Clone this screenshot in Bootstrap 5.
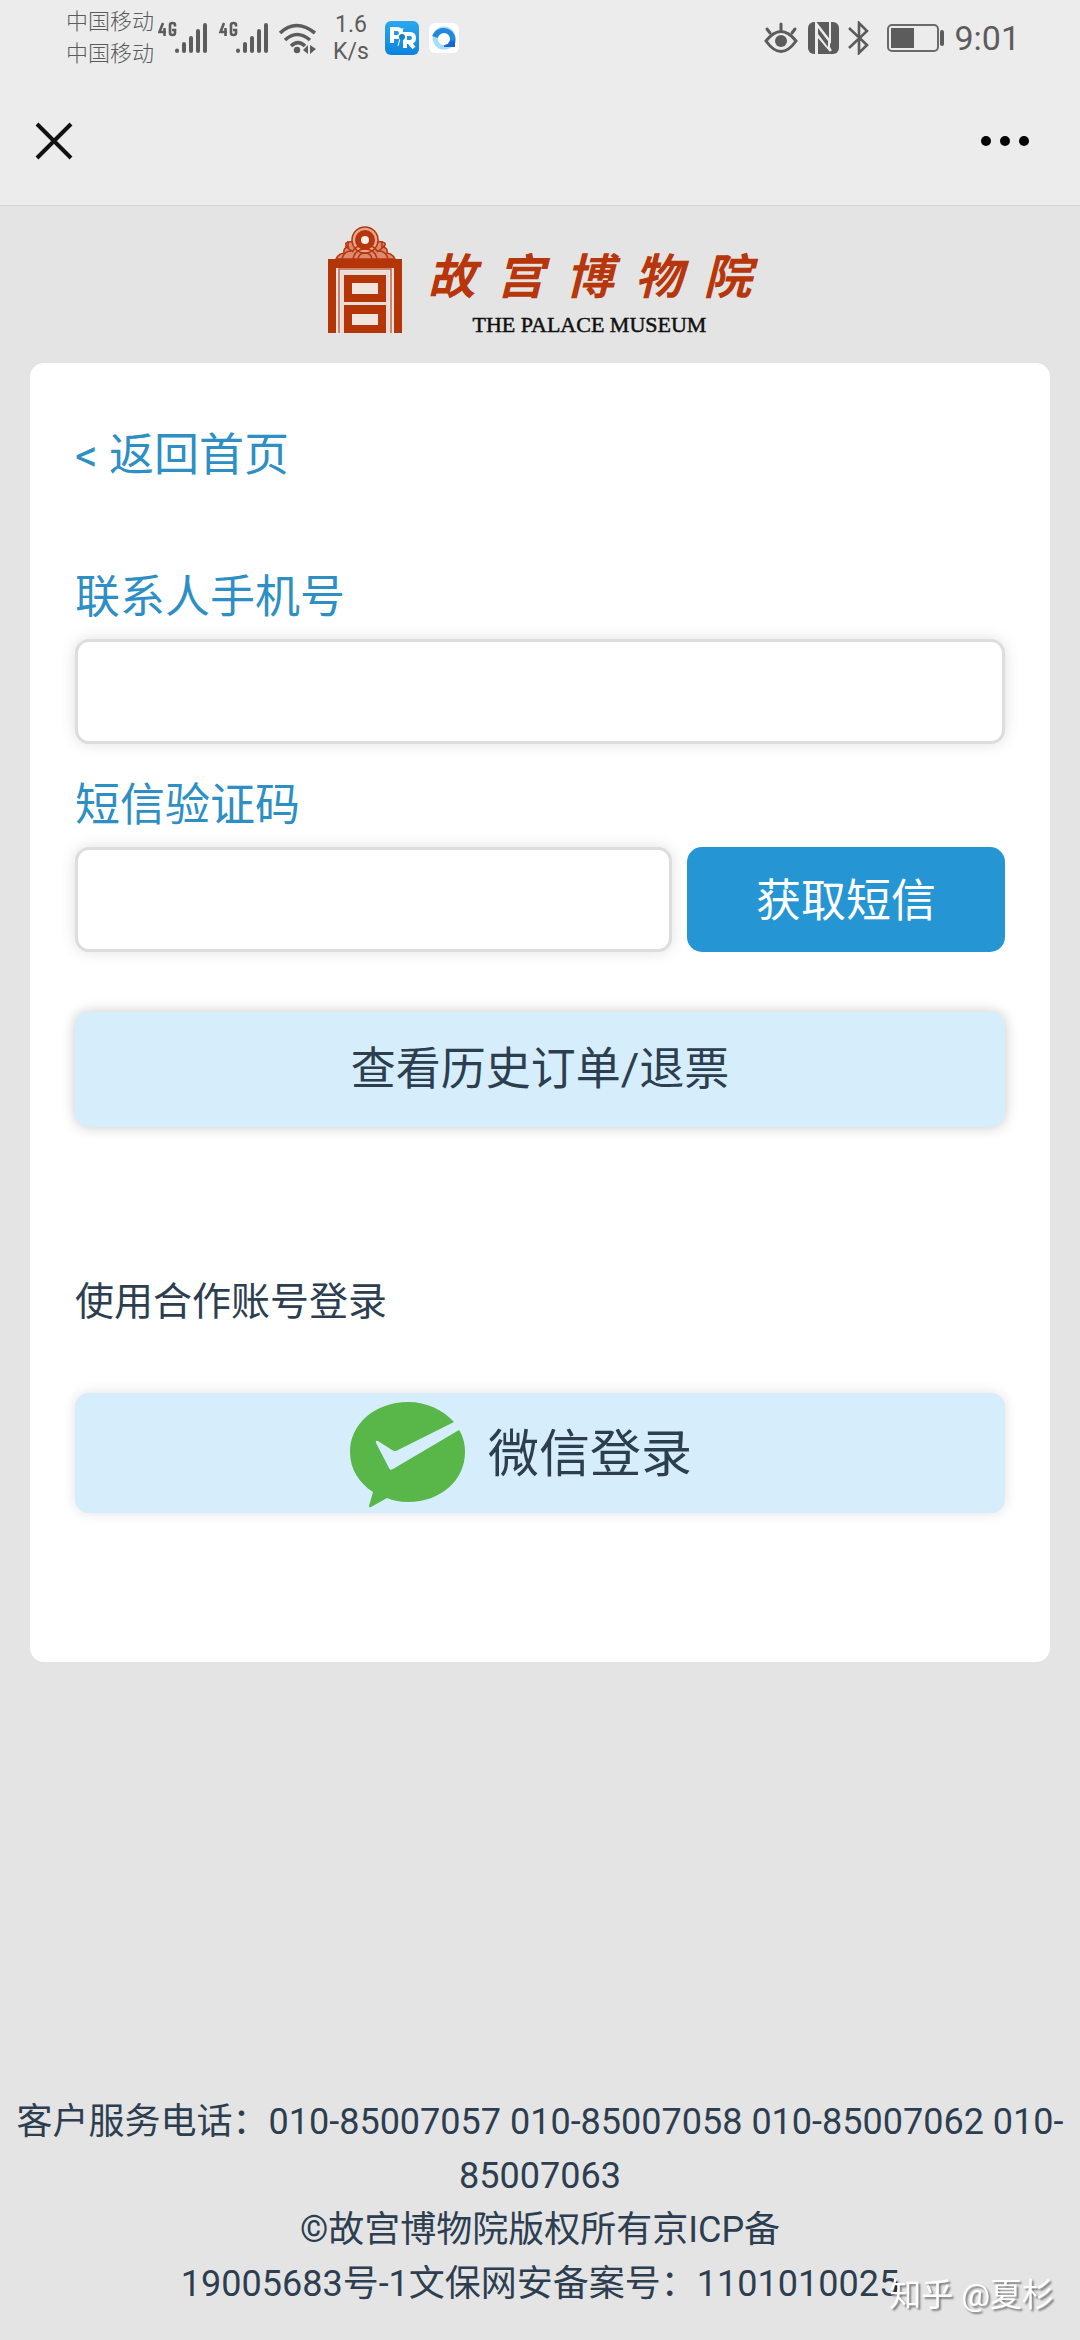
<!DOCTYPE html>
<html lang="zh-CN">
<head>
<meta charset="utf-8">
<meta name="viewport" content="width=device-width, initial-scale=1">
<title>故宫博物院</title>
<link href="https://cdn.jsdelivr.net/npm/bootstrap@5.3.0/dist/css/bootstrap.min.css" rel="stylesheet">
<style>
  body { background: #e4e4e4; color: #2c3e50; font-family: Roboto, "Noto Sans CJK SC", sans-serif; font-size: 45px; line-height: 60px; }
  svg { display: block; flex: none; }
  .top-area { background: #ececec; border-bottom: 1px solid #d6d6d6; }
  .status-line { height: 76px; padding: 0 60px 0 66px; color: #5c5c5c; }
  .carriers { font-size: 22px; line-height: 32px; font-weight: 300; }
  .speed { width: 36px; margin: 0 16px 0 13px; font-size: 23px; line-height: 27px; text-align: center; }
  .clock { font-size: 34px; line-height: 40px; }
  .title-line { height: 129px; padding: 0 45px 0 30px; }
  .icon-btn { background: none; border: 0; padding: 0; }
  .brand { padding: 19px 0 26px; gap: 25px; }
  .brand-cn { color: #b7360b; font: italic 700 48px/64px "Noto Sans CJK SC", sans-serif; gap: 21px; }
  .brand-en { color: #111; font: 22px/24px "Liberation Serif", serif; -webkit-text-stroke: .5px #111; }
  .panel { background: #fff; border-radius: 14px; margin: 0 30px; padding: 63px 45px 149px; }
  .back-link, .field-label { color: #2e8fc4; }
  .back-link { display: inline-block; margin-bottom: 82px; }
  .field-label { display: block; margin-bottom: 11px; }
  .field-box { height: 105px; border: 3px solid #ddd; border-radius: 14px; box-shadow: 0 0 16px rgba(0,0,0,.12); font-size: 45px; }
  .field-box:focus { border-color: #2695d3; }
  .code-row { gap: 15px; }
  .sms-btn { width: 318px; flex: none; height: 105px; padding-top: 10px; border-radius: 15px; background: #2695d3; color: #fff; font-size: 45px; line-height: 60px; }
  .pale-btn { width: 100%; border: 0; border-radius: 14px; background: #d6edfb; color: #2c3e50; box-shadow: 0 0 14px rgba(0,0,0,.22); }
  .order-btn { height: 115px; margin-top: 60px; font-size: 45px; line-height: 60px; }
  .partner { margin: 145px 0 61px; font-size: 39px; }
  .wechat-btn { height: 120px; gap: 22px; padding: 4px 38px 0 0; font-size: 51px; box-shadow: 0 0 14px rgba(0,0,0,.12); }
  .page-foot { padding: 40px 8px 29px; font-size: 36px; line-height: 54px; }
  .watermark { position: fixed; right: 26px; bottom: 25px; color: #fff; font-size: 32px; line-height: 40px; text-shadow: 2px 2px 2px rgba(0,0,0,.45); }
</style>
</head>
<body class="min-vh-100 d-flex flex-column">
<header class="top-area">
  <div class="status-line d-flex align-items-center justify-content-between">
    <div class="d-flex align-items-center">
      <div class="carriers"><div>中国移动</div><div>中国移动</div></div>
      <svg class="ms-1" width="112" height="34" viewBox="0 0 112 34" aria-label="4G">
        <g id="sig">
          <g fill="none" stroke="#5c5c5c" stroke-width="2.6"><path d="M5 2 1.500 11h6.500M6.500 7v8M17 5.500V4q0-2-2.500-2T12 4v8q0 2 2.500 2T17 12V9h-3"/></g>
          <g stroke="#5c5c5c" stroke-width="4" stroke-linecap="round"><path d="M19 29.500v.5M26 23v7M33 17v13M40 10v20M47 4v26"/></g>
        </g>
        <use href="#sig" x="61"/>
      </svg>
      <svg class="ms-2" width="42" height="34" viewBox="0 0 42 34">
        <g fill="none" stroke="#5c5c5c" stroke-width="3.600"><path d="M2 12q16-15 35 0M7 19q12-11 25 0M13 25q7-7 14 0"/></g>
        <circle cx="19" cy="29" r="3.200" fill="#5c5c5c"/>
        <path d="M30 24v9l-5-4zM32 24v9l6-5z" fill="#5c5c5c"/>
      </svg>
      <div class="speed"><div>1.6</div><div>K/s</div></div>
      <svg width="34" height="34" viewBox="0 0 34 34">
        <defs><linearGradient id="bl" x2="0" y2="1"><stop stop-color="#2aa8ef"/><stop offset="1" stop-color="#0d82dc"/></linearGradient></defs>
        <rect width="34" height="34" rx="6" fill="url(#bl)"/>
        <g fill="none" stroke="#fff" stroke-width="4"><path d="M7 22V8h5q4 0 4 4t-4 4H8M20 27V13h5q4 0 4 4t-4 4h-4M24 21l5 6"/></g>
        <path d="m18 7-5 18" stroke="#fff" stroke-width="1"/>
        <circle cx="17" cy="16" r="3" fill="#1380c8"/>
      </svg>
      <svg class="ms-2" width="34" height="34" viewBox="0 0 34 34">
        <rect x="2" y="2" width="30" height="30" rx="6" fill="#fff"/>
        <circle cx="17" cy="17" r="9" fill="none" stroke="#a9dcf7" stroke-width="5"/>
        <path d="M8 16A9 9 0 1 1 25 22" fill="none" stroke="#2089de" stroke-width="6"/>
        <path d="M17 25q3-7 11-5v6H17z" fill="#1569cf"/>
        <circle cx="17" cy="18" r="6" fill="#fff"/>
      </svg>
    </div>
    <div class="d-flex align-items-center">
      <svg width="34" height="34" viewBox="0 0 34 34" fill="none" stroke="#5c5c5c">
        <path d="M2 20q15-19 30 0-15 21-30 0z" stroke-width="3"/>
        <path d="M17 10V3M6 12 3 8M28 12l3-4" stroke-width="3" stroke-linecap="round"/>
        <circle cx="17" cy="20" r="6" fill="#5c5c5c" stroke="none"/>
      </svg>
      <svg class="ms-2" width="34" height="34" viewBox="0 0 34 34">
        <rect x="2" y="1" width="31" height="32" rx="6" fill="#5c5c5c"/>
        <path d="M10 32V2l14 18V1M11 4l14 26" fill="none" stroke="#ececec" stroke-width="2"/>
        <path d="m10 2 14 17v12L12 17v16H9z" fill="#ececec"/>
        <path d="m12 7 10 13v6L12 13z" fill="#5c5c5c"/>
      </svg>
      <svg class="ms-2" width="22" height="34" viewBox="0 0 22 34" fill="none" stroke="#5c5c5c" stroke-width="2.600">
        <path d="m1 7 18 17-8 8V2l8 8L1 27"/>
      </svg>
      <svg class="ms-3" width="60" height="30" viewBox="0 0 60 30">
        <rect x="2" y="2" width="50" height="26" rx="4" fill="none" stroke="#6a6a6a" stroke-width="2"/>
        <rect x="5" y="5" width="23" height="20" fill="#5c5c5c"/>
        <rect x="54" y="7" width="4" height="16" rx="2" fill="#5c5c5c"/>
      </svg>
      <div class="clock ms-2">9:01</div>
    </div>
  </div>
  <div class="title-line d-flex align-items-center justify-content-between">
    <button type="button" class="icon-btn" aria-label="关闭">
      <svg width="48" height="48" viewBox="0 0 48 48" stroke="#111" stroke-width="4"><path d="m7 7 34 34M41 7 7 41"/></svg>
    </button>
    <button type="button" class="icon-btn" aria-label="更多">
      <svg width="60" height="20" viewBox="0 0 60 20"><circle cx="11" cy="10" r="5"/><circle cx="30" cy="10" r="5"/><circle cx="49" cy="10" r="5"/></svg>
    </button>
  </div>
</header>

<div class="brand d-flex justify-content-center align-items-center">
  <svg width="74" height="110" viewBox="0 0 74 110">
    <g fill="#e4b8a8" stroke="#b7360b" stroke-width="1.500">
      <path d="M8 33q2-5 8-6-1-5 4-6-5-4 1-5 5-2 9 3h15q4-5 9-3 6 1 1 5 5 1 4 6 6 1 8 6z" fill="#d98a70"/>
      <circle cx="37" cy="14" r="13" fill="#e4a792"/>
      <path d="M14 33q2-9 11-8 3-6 12-6t12 6q9-1 11 8M25 33q2-10 12-10t12 10M30 33q1-6 7-6t7 6M17 20l8 6M57 20l-8 6M20 15v7M54 15v7" fill="none"/>
    </g>
    <circle cx="37" cy="14" r="7" fill="#f4eee9" stroke="#b7360b" stroke-width="6"/>
    <path d="M13 107V45h48v62" fill="#ecdcd6"/>
    <path d="M0 33h74v74h-8V42H8v65H0z" fill="#b43508"/>
    <path d="M11 107V43h52v64" fill="none" stroke="#c9613d" stroke-width="1.500"/>
    <path d="M16 49h42v27H16zM16 79h42v28H16z" fill="#b43508"/>
    <path d="M24 57h26v11H24zM24 88h26v11H24z" fill="#f1e5e0"/>
  </svg>
  <div class="d-flex flex-column align-items-center gap-2 pt-3">
    <div class="brand-cn d-flex"><span>故</span><span>宫</span><span>博</span><span>物</span><span>院</span></div>
    <div class="brand-en">THE PALACE MUSEUM</div>
  </div>
</div>

<main class="panel">
  <a href="#" class="back-link text-decoration-none">&lt; 返回首页</a>
  <form>
    <label class="field-label" for="phone">联系人手机号</label>
    <input id="phone" type="tel" class="form-control field-box mb-4">
    <label class="field-label pt-2" for="code">短信验证码</label>
    <div class="code-row d-flex">
      <input id="code" type="text" class="form-control field-box">
      <button type="button" class="btn sms-btn">获取短信</button>
    </div>
    <button type="button" class="pale-btn order-btn">查看历史订单/退票</button>
  </form>
  <p class="partner">使用合作账号登录</p>
  <button type="button" class="pale-btn wechat-btn d-flex justify-content-center align-items-center">
    <svg width="116" height="106" viewBox="0 0 116 106">
      <path d="M58 0C25 0 0 22 0 50c0 17 9 31 23 40l-4 14q0 2 2 1l16-9q9 4 21 4c33 0 57-22 57-50 0-8-2-16-6-22L43 67q-3 2-4-1L26 41q-1-3 2-2l14 9q3 2 6 0l56-28C93 8 77 0 58 0z" fill="#59b649"/>
    </svg>
    <span>微信登录</span>
  </button>
</main>

<footer class="page-foot mt-auto text-center">
  <div>客户服务电话：010-85007057 010-85007058 010-85007062 010-85007063</div>
  <div>©故宫博物院版权所有京ICP备</div>
  <div>19005683号-1文保网安备案号：1101010025</div>
</footer>
<div class="watermark">知乎 @夏杉</div>
<script src="https://cdn.jsdelivr.net/npm/bootstrap@5.3.0/dist/js/bootstrap.bundle.min.js"></script>
</body>
</html>
